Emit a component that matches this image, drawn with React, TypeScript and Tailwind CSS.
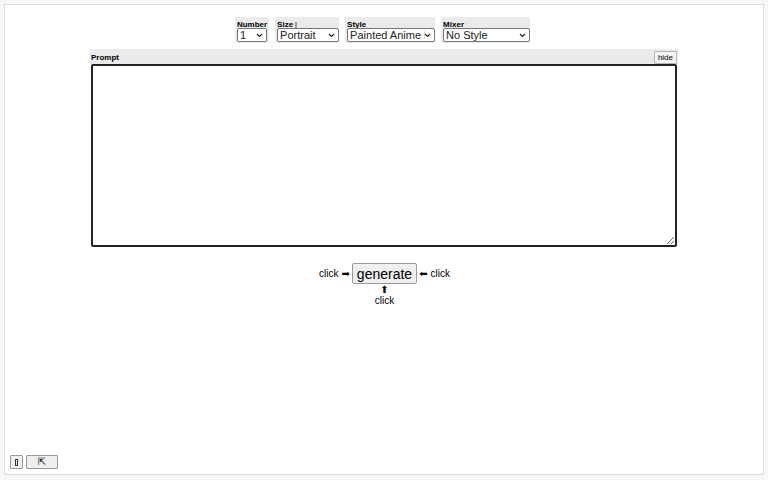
import { useState } from 'react';

const font = { fontFamily: '"Liberation Sans", Arial, sans-serif' };
const glyph = { fontFamily: '"DejaVu Sans", sans-serif' };

function Control({ label, width, options, extra, padRight }: { label: string; width: string; options: string[]; extra?: boolean; padRight?: boolean }) {
    return (
        <div className={`flex flex-col bg-[#ebebeb] pl-[2px] pt-[4px] pb-[1px] ${padRight ? 'pr-[2px]' : ''}`}>
            <div className="text-[8px] font-bold leading-[8px] h-[7px] flex items-center gap-[2px] text-black">
                {label}
                {extra && <span className="inline-block w-[2px] h-[6px] border-[0.5px] border-[#999]"></span>}
            </div>
            <div className={`relative ${width} h-[14px]`}>
                <select className="block appearance-none w-full h-full pl-[2px] pr-[9px] text-[11px] leading-[12px] bg-white border border-[#767676] rounded-[2px] text-[#222] overflow-hidden whitespace-nowrap">
                    {options.map((o) => (
                        <option key={o}>{o}</option>
                    ))}
                </select>
                <svg className="absolute right-[4px] top-[5px] pointer-events-none" width="7" height="5" viewBox="0 0 7 5">
                    <path d="M1 1 L3.5 3.5 L6 1" fill="none" stroke="#222" strokeWidth="1.2" />
                </svg>
            </div>
        </div>
    );
}

export default function App() {
    const [showPrompt, setShowPrompt] = useState(true);

    return (
        <div style={font} className="w-[768px] h-[480px] bg-[#f7f7f7] p-[4px] text-black">
            <div className="h-[471px] bg-white border border-[#dcdcdc] flex flex-col">
                <div className="flex justify-center gap-[6px] pt-[12px] mr-[3px]">
                    <Control label="Number" width="w-[30px]" options={['1', '2', '3', '4']} padRight />
                    <Control label="Size" width="w-[62px]" options={['Portrait', 'Landscape', 'Square']} extra />
                    <Control label="Style" width="w-[88px]" options={['Painted Anime Plus', 'No Style']} />
                    <Control label="Mixer" width="w-[87px]" options={['No Style']} />
                </div>

                <div className="mt-[6px] w-[589px] ml-[84px] flex flex-col">
                    <div className="bg-[#ebebeb] h-[15px] flex items-center justify-between pl-[2px] pr-[1px]">
                        <span className="text-[8px] font-bold mt-[2px]">Prompt</span>
                        <button
                            onClick={() => setShowPrompt(!showPrompt)}
                            className="text-[8px] h-[13px] px-[3px] mt-[2px] bg-[#f4f4f4] border border-[#b5b5b5] rounded-[1px] leading-none"
                        >
                            hide
                        </button>
                    </div>
                    {showPrompt && (
                        <textarea className="ml-[2px] w-[586px] h-[183px] border-2 border-[#222] rounded-[2px] bg-white resize-y outline-none"></textarea>
                    )}
                </div>

                <div className="flex flex-col items-center mt-[16px] ml-[1px]">
                    <div className="flex items-center gap-[2px] text-[10px]">
                        <span className="mr-[1px]">click</span>
                        <span className="text-[10px]" style={glyph}>➡</span>
                        <button className="text-[14px] h-[21px] px-[4px] bg-[#efefef] border border-[#9a9a9a] rounded-[2px] leading-none">
                            generate
                        </button>
                        <span className="text-[10px]" style={glyph}>⬅</span>
                        <span className="ml-[1px]">click</span>
                    </div>
                    <span className="text-[10px] leading-[10px] mt-[1px]" style={glyph}>⬆</span>
                    <span className="text-[10px] leading-[12px]">click</span>
                </div>

                <div className="mt-auto flex gap-[3px] pl-[5px] pb-[5px]">
                    <button className="w-[13px] h-[14px] bg-[#efefef] border border-[#9a9a9a] rounded-[1px] flex items-center justify-center">
                        <span className="inline-block w-[3px] h-[7px] border-[0.5px] border-[#333]"></span>
                    </button>
                    <button className="w-[32px] h-[14px] bg-[#efefef] border border-[#9a9a9a] rounded-[1px] flex items-center justify-center text-[10px] leading-none" style={glyph}>
                        ⇱
                    </button>
                </div>
            </div>
        </div>
    );
}
